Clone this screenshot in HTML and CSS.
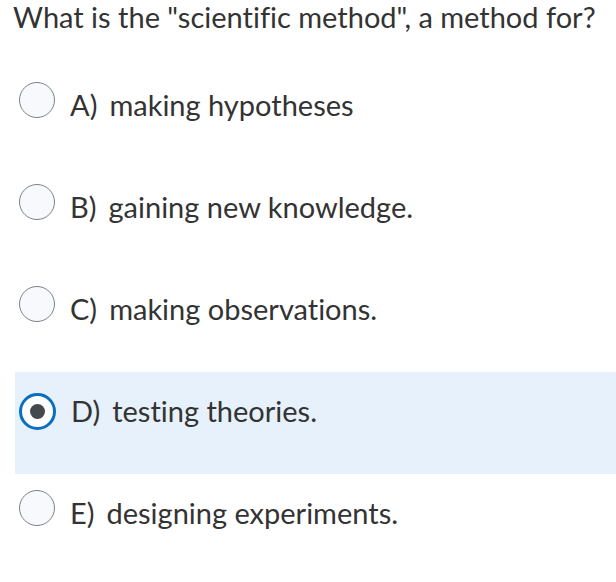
FILE: index.html
```html
<!DOCTYPE html>
<html lang="en">

<head>
  <meta charset="UTF-8">
  <title>Question</title>
  <link rel="stylesheet" href="styles.css">
</head>

<body>
  <div class="quiz">
    <h1 class="question">What is the "scientific method", a method for?</h1>
    <div class="answers">
      <label class="option">
        <span class="radio"></span>
        <span class="text"><span class="letter">A)</span><span>making hypotheses</span></span>
      </label>
      <label class="option">
        <span class="radio"></span>
        <span class="text"><span class="letter">B)</span><span>gaining new knowledge.</span></span>
      </label>
      <label class="option">
        <span class="radio"></span>
        <span class="text"><span class="letter">C)</span><span>making observations.</span></span>
      </label>
      <label class="option selected">
        <span class="radio"></span>
        <span class="text"><span class="letter">D)</span><span>testing theories.</span></span>
      </label>
      <label class="option">
        <span class="radio"></span>
        <span class="text"><span class="letter">E)</span><span>designing experiments.</span></span>
      </label>
    </div>
  </div>
</body>

</html>
```

FILE: styles.css
```css
body {
  margin: 0;
  background-color: white;
  color: #333;
  font-family: Lato, "Open Sans", sans-serif;
  font-variant-ligatures: none;
}

.quiz {
  width: 616px;
}

.question {
  margin: 0;
  padding: 0 13px;
  font-size: 29px;
  font-weight: normal;
  line-height: 34px;
}

.answers {
  margin-top: 32px;
  display: flex;
  flex-direction: column;
}

.option {
  height: 102px;
  margin-left: 15px;
  padding-left: 4px;
  display: flex;
  align-items: flex-start;
  gap: 15px;
  cursor: pointer;
}

.radio {
  width: 34px;
  height: 34px;
  margin-top: 16px;
  border: 1px solid #7a8188;
  border-radius: 50%;
  background-color: #f8f9fc;
  flex-shrink: 0;
  display: flex;
  align-items: center;
  justify-content: center;
}

.text {
  margin-top: 18px;
  font-size: 29px;
  line-height: 42px;
  display: flex;
  gap: 12px;
}

.selected {
  background-color: #e6f1fb;
}

.selected .radio {
  width: 31px;
  height: 31px;
  margin-top: 21px;
  border: 3px solid #0a6fbe;
  background-color: white;
}

.selected .radio::after {
  content: "";
  width: 15px;
  height: 15px;
  border-radius: 50%;
  background-color: #46494c;
}
```
